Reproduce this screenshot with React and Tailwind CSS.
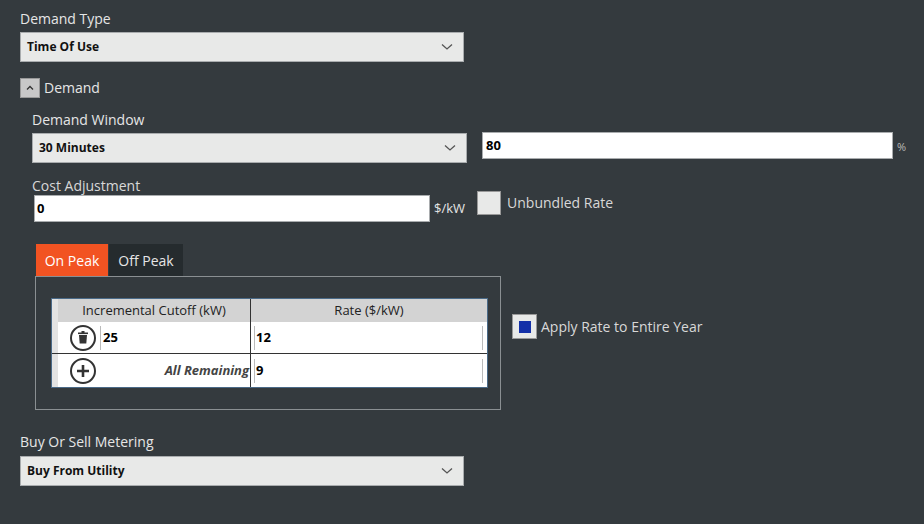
import React from "react";

const Chevron = () => (
  <svg width="12" height="8" viewBox="0 0 12 8" className="mr-[6px]"><path d="M1 1.5 L6 6 L11 1.5" stroke="#555" strokeWidth="1.3" fill="none" /></svg>
);

const Select = ({ w, text }) => (
  <div className={`${w} h-[30px] bg-[#e8e9e8] border border-[#a9acae] flex items-center justify-between pl-[6px] pr-[4px]`}>
    <span className="text-[12px] font-bold text-[#111]">{text}</span>
    <Chevron />
  </div>
);

export default function App() {
  return (
    <div className="w-[924px] h-[524px] bg-[#343a3e] text-[#e6e6e6] overflow-hidden relative" style={{ fontFamily: '"Open Sans", "Noto Sans", sans-serif' }}>
      <div className="pl-[20px] pt-[9px]">
        <div className="text-[14px] leading-[20px]">Demand Type</div>
        <div className="mt-[3px]"><Select w="w-[444px]" text="Time Of Use" /></div>
        <div className="mt-[15px] flex items-center gap-[4px]">
          <div className="w-[20px] h-[20px] bg-[#c8c8c8] border border-[#999] flex items-center justify-center">
            <svg width="8" height="6" viewBox="0 0 8 6"><path d="M1 4.5 L4 1.5 L7 4.5" stroke="#333" strokeWidth="1.3" fill="none" /></svg>
          </div>
          <span className="text-[14px]">Demand</span>
        </div>
        <div className="pl-[12px] mt-[12px]">
          <div className="text-[14px] leading-[20px]">Demand Window</div>
          <div className="flex items-start mt-[3px]">
            <Select w="w-[435px]" text="30 Minutes" />
            <div className="ml-[15px] w-[411px] h-[27px] bg-white border border-[#a9acae] flex items-center pl-[3px] text-[13px] font-bold text-black -mt-[1px]">80</div>
            <span className="ml-[4px] mt-[6px] text-[11px] text-[#bbb]">%</span>
          </div>
          <div className="text-[14px] leading-[20px] mt-[13px] text-[#d8d8d8]">Cost Adjustment</div>
          <div className="flex items-center -mt-[1px]">
            <div className="ml-[2px] w-[396px] h-[27px] bg-white border border-[#a9acae] flex items-center pl-[2px] text-[13px] font-bold text-black">0</div>
            <span className="ml-[4px] text-[13px]">$/kW</span>
            <div className="ml-[12px] -mt-[12px] w-[24px] h-[24px] bg-[#e8e9e8] border border-[#999]" />
            <span className="ml-[6px] -mt-[12px] text-[14px] text-[#d8d8d8]">Unbundled Rate</span>
          </div>
          <div className="mt-[22px] ml-[4px] flex text-[14px]">
            <div className="w-[72px] h-[32px] bg-[#f25322] flex items-center justify-center text-white">On Peak</div>
            <div className="ml-[1px] w-[74px] h-[32px] bg-[#252b2e] flex items-center justify-center">Off Peak</div>
          </div>
          <div className="flex items-start">
            <div className="ml-[3px] w-[466px] h-[134px] border border-[#8a8f92] pt-[21px] pl-[15px]">
              <div className="w-[437px] border border-[#4a6a88] bg-white flex flex-col text-black">
                <div className="flex h-[23px] bg-[#d3d3d3] text-[13px] text-[#222]">
                  <div className="w-[6px] bg-[#e3e3e3]" />
                  <div className="w-[193px] flex items-center justify-center border-r border-[#333]">Incremental Cutoff (kW)</div>
                  <div className="flex-1 flex items-center justify-center">Rate ($/kW)</div>
                </div>
                <div className="flex h-[32px] border-b border-[#333]">
                  <div className="w-[6px] bg-[#e3e3e3]" />
                  <div className="w-[193px] flex items-center border-r border-[#333]">
                    <div className="ml-[12px] w-[26px] h-[26px] rounded-full border-2 border-[#333] flex items-center justify-center">
                      <svg width="12" height="13" viewBox="0 0 12 13"><rect x="1" y="1.5" width="10" height="1.6" fill="#333"/><rect x="4.5" y="0" width="3" height="2" fill="#333"/><path d="M2 4 H10 L9.3 12.5 H2.7 Z" fill="#333"/></svg>
                    </div>
                    <div className="ml-[4px] h-[24px] border-l border-[#bbb] pl-[2px] flex items-center text-[13px] font-bold">25</div>
                  </div>
                  <div className="flex-1 flex items-center pl-[3px] text-[13px] font-bold"><div className="h-[24px] border-l border-[#bbb] pl-[1px] flex items-center flex-1 border-r mr-[4px]">12</div></div>
                </div>
                <div className="flex h-[33px]">
                  <div className="w-[6px] bg-[#e3e3e3]" />
                  <div className="w-[193px] flex items-center border-r border-[#333]">
                    <div className="ml-[12px] w-[26px] h-[26px] rounded-full border-2 border-[#333] flex items-center justify-center">
                      <svg width="14" height="14" viewBox="0 0 14 14"><path d="M7 1 V13 M1 7 H13" stroke="#333" strokeWidth="2.6" /></svg>
                    </div>
                    <div className="flex-1 text-right text-[13px] font-bold italic text-[#444] pr-[1px]">All Remaining</div>
                  </div>
                  <div className="flex-1 flex items-center pl-[3px] text-[13px] font-bold"><div className="h-[24px] border-l border-[#bbb] pl-[1px] flex items-center flex-1 border-r mr-[4px]">9</div></div>
                </div>
              </div>
            </div>
            <div className="ml-[11px] mt-[38px] flex items-center">
              <div className="w-[25px] h-[25px] bg-[#e8e9e8] border border-[#999] flex items-center justify-center">
                <div className="w-[12px] h-[12px] bg-[#1430a8]" />
              </div>
              <span className="ml-[4px] text-[14px] text-[#d8d8d8]">Apply Rate to Entire Year</span>
            </div>
          </div>
        </div>
        <div className="mt-[22px] text-[14px] leading-[20px]">Buy Or Sell Metering</div>
        <div className="mt-[4px]"><Select w="w-[444px]" text="Buy From Utility" /></div>
      </div>
    </div>
  );
}
